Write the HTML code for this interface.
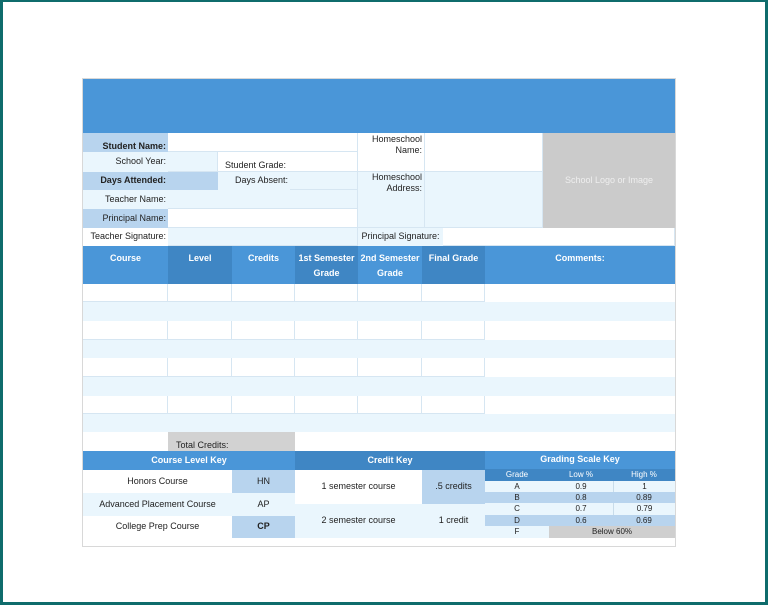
<!DOCTYPE html>
<html><head><meta charset="utf-8"><style>
*{margin:0;padding:0;box-sizing:border-box}
body{width:768px;height:605px;background:#fff;position:relative;overflow:hidden;font-family:"Liberation Sans",Arial,sans-serif;font-size:9px;color:#222}
#frame{position:absolute;left:0;top:0;width:768px;height:605px;border:3px solid #0f6c6c;border-top-width:2px}
.c{position:absolute;display:flex;align-items:center;justify-content:center;text-align:center;line-height:1.25}
.r{justify-content:flex-end;padding-right:2px;text-align:right}
.b{font-weight:bold}
.w{color:#fff;font-weight:bold}
.lb{background:#b8d4ee}
.lt{background:#eaf6fd}
.wh{background:#fff}
.hd{background:#4a96d8}
.hk{background:#3f86c4}
.gl{border-right:1px solid #d6e6f2;border-bottom:1px solid #d6e6f2}
</style></head><body>
<div id="frame"></div>
<div class="c" style="left:82px;top:78px;width:594px;height:469px;border:1px solid #d8d8d8"></div>
<div class="c hd" style="left:83px;top:79px;width:592px;height:54px"></div>

<!-- left info -->
<div class="c r lb b" style="left:83px;top:133px;width:85px;height:19px;align-items:flex-end">Student Name:</div>
<div class="c wh gl" style="left:168px;top:133px;width:190px;height:19px"></div>
<div class="c r lt" style="left:83px;top:152px;width:85px;height:20px">School Year:</div>
<div class="c lt gl" style="left:168px;top:152px;width:50px;height:20px"></div>
<div class="c wh gl" style="left:218px;top:152px;width:140px;height:20px;justify-content:flex-start;padding-left:7px;align-items:flex-end">Student Grade:</div>
<div class="c r lb b" style="left:83px;top:172px;width:135px;height:18px;padding-right:52px">Days Attended:</div>
<div class="c r lt" style="left:218px;top:172px;width:72px;height:18px">Days Absent:</div>
<div class="c lt gl" style="left:290px;top:172px;width:68px;height:18px"></div>
<div class="c r lt" style="left:83px;top:190px;width:85px;height:19px">Teacher Name:</div>
<div class="c lt gl" style="left:168px;top:190px;width:190px;height:19px"></div>
<div class="c r lb" style="left:83px;top:209px;width:85px;height:19px">Principal Name:</div>
<div class="c wh gl" style="left:168px;top:209px;width:190px;height:19px"></div>
<div class="c r wh" style="left:83px;top:228px;width:85px;height:18px">Teacher Signature:</div>
<div class="c lt gl" style="left:168px;top:228px;width:190px;height:18px"></div>

<!-- right info -->
<div class="c r wh gl" style="left:358px;top:133px;width:67px;height:39px;align-items:flex-start;padding-top:1px">Homeschool<br>Name:</div>
<div class="c wh gl" style="left:425px;top:133px;width:118px;height:39px"></div>
<div class="c r lt gl" style="left:358px;top:172px;width:67px;height:56px;align-items:flex-start;padding-top:0">Homeschool<br>Address:</div>
<div class="c lt gl" style="left:425px;top:172px;width:118px;height:56px"></div>
<div class="c" style="left:543px;top:133px;width:132px;height:95px;background:#cbcbcb;color:#eee">School Logo or Image</div>
<div class="c lt" style="left:358px;top:228px;width:85px;height:18px">Principal Signature:</div>
<div class="c wh gl" style="left:443px;top:228px;width:232px;height:18px"></div>

<!-- table header -->
<div class="c hd w" style="left:83px;top:246px;width:85px;height:38px;align-items:flex-start;padding-top:7px">Course</div>
<div class="c hk w" style="left:168px;top:246px;width:64px;height:38px;align-items:flex-start;padding-top:7px">Level</div>
<div class="c hd w" style="left:232px;top:246px;width:63px;height:38px;align-items:flex-start;padding-top:7px">Credits</div>
<div class="c hk w" style="left:295px;top:246px;width:63px;height:38px;padding-top:1px;line-height:1.6">1st Semester<br>Grade</div>
<div class="c hd w" style="left:358px;top:246px;width:64px;height:38px;padding-top:1px;line-height:1.6">2nd Semester<br>Grade</div>
<div class="c hk w" style="left:422px;top:246px;width:63px;height:38px;align-items:flex-start;padding-top:7px">Final Grade</div>
<div class="c hd w" style="left:485px;top:246px;width:190px;height:38px;align-items:flex-start;padding-top:7px">Comments:</div>

<div id="rows"></div>
<script></script>
<!-- rows -->
<div style="position:absolute;left:83px;top:284px;width:592px">
<div style="height:18px;background:#fff;display:flex"><i style="width:85px" class="gl"></i><i style="width:64px" class="gl"></i><i style="width:63px" class="gl"></i><i style="width:63px" class="gl"></i><i style="width:64px" class="gl"></i><i style="width:63px" class="gl"></i></div>
<div style="height:19px;background:#eaf6fd"></div>
<div style="height:19px;background:#fff;display:flex"><i style="width:85px" class="gl"></i><i style="width:64px" class="gl"></i><i style="width:63px" class="gl"></i><i style="width:63px" class="gl"></i><i style="width:64px" class="gl"></i><i style="width:63px" class="gl"></i></div>
<div style="height:18px;background:#eaf6fd"></div>
<div style="height:19px;background:#fff;display:flex"><i style="width:85px" class="gl"></i><i style="width:64px" class="gl"></i><i style="width:63px" class="gl"></i><i style="width:63px" class="gl"></i><i style="width:64px" class="gl"></i><i style="width:63px" class="gl"></i></div>
<div style="height:19px;background:#eaf6fd"></div>
<div style="height:18px;background:#fff;display:flex"><i style="width:85px" class="gl"></i><i style="width:64px" class="gl"></i><i style="width:63px" class="gl"></i><i style="width:63px" class="gl"></i><i style="width:64px" class="gl"></i><i style="width:63px" class="gl"></i></div>
<div style="height:18px;background:#eaf6fd"></div>
</div>
<div class="c wh" style="left:83px;top:432px;width:592px;height:19px"></div>
<div class="c" style="left:168px;top:432px;width:127px;height:19px;background:#d2d2d2;align-items:flex-end;justify-content:flex-start;padding-left:8px">Total Credits:</div>

<!-- keys -->
<div class="c hd w" style="left:83px;top:451px;width:212px;height:19px">Course Level Key</div>
<div class="c hk w" style="left:295px;top:451px;width:190px;height:19px">Credit Key</div>
<div class="c hd w" style="left:485px;top:451px;width:190px;height:18px">Grading Scale Key</div>

<div class="c wh" style="left:83px;top:470px;width:149px;height:23px">Honors Course</div>
<div class="c lb" style="left:232px;top:470px;width:63px;height:23px">HN</div>
<div class="c lt" style="left:83px;top:493px;width:149px;height:23px">Advanced Placement Course</div>
<div class="c lt" style="left:232px;top:493px;width:63px;height:23px">AP</div>
<div class="c wh" style="left:83px;top:516px;width:149px;height:22px">College Prep Course</div>
<div class="c lb b" style="left:232px;top:516px;width:63px;height:22px">CP</div>

<div class="c wh" style="left:295px;top:470px;width:127px;height:34px">1 semester course</div>
<div class="c lb" style="left:422px;top:470px;width:63px;height:34px">.5 credits</div>
<div class="c lt" style="left:295px;top:504px;width:127px;height:34px">2 semester course</div>
<div class="c lt" style="left:422px;top:504px;width:63px;height:34px">1 credit</div>

<div style="position:absolute;left:485px;top:469px;width:190px;font-size:8px">
<div style="display:flex;height:12px;background:#3f86c4;color:#fff"><span class="c" style="position:static;width:64px">Grade</span><span class="c" style="position:static;width:64px">Low %</span><span class="c" style="position:static;width:62px">High %</span></div>
<div style="display:flex;height:11px;background:#eaf6fd"><span class="c" style="position:static;width:64px">A</span><span class="c" style="position:static;width:64px">0.9</span><span class="c" style="position:static;width:62px;border-left:1px solid #c8dcea">1</span></div>
<div style="display:flex;height:11px;background:#b8d4ee"><span class="c" style="position:static;width:64px">B</span><span class="c" style="position:static;width:64px">0.8</span><span class="c" style="position:static;width:62px">0.89</span></div>
<div style="display:flex;height:12px;background:#eaf6fd"><span class="c" style="position:static;width:64px">C</span><span class="c" style="position:static;width:64px">0.7</span><span class="c" style="position:static;width:62px;border-left:1px solid #c8dcea">0.79</span></div>
<div style="display:flex;height:11px;background:#b8d4ee"><span class="c" style="position:static;width:64px">D</span><span class="c" style="position:static;width:64px">0.6</span><span class="c" style="position:static;width:62px">0.69</span></div>
<div style="display:flex;height:12px;background:#eaf6fd"><span class="c" style="position:static;width:64px">F</span><span class="c" style="position:static;width:126px;background:#cfcfcf">Below 60%</span></div>
</div>
</body></html>
